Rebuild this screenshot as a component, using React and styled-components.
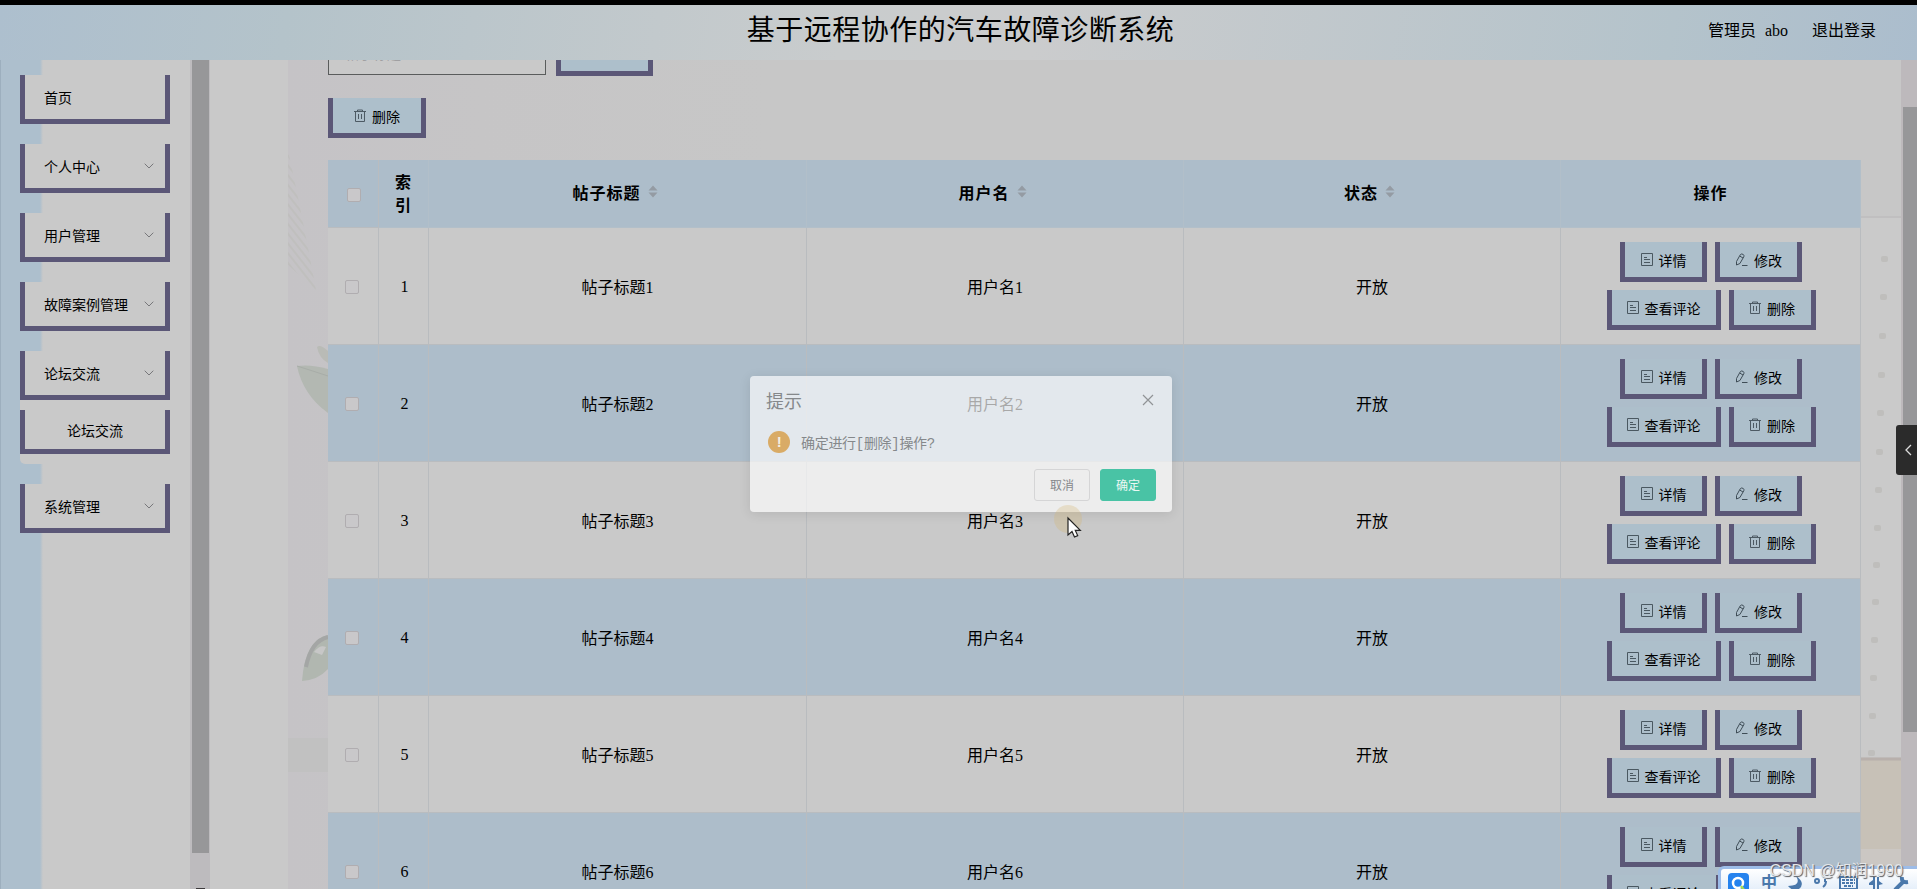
import styled, { createGlobalStyle } from 'styled-components';

const MENUS = [
  { name: '首页' },
  { name: '个人中心', arrow: true },
  { name: '用户管理', arrow: true },
  { name: '故障案例管理', arrow: true },
  { name: '论坛交流', arrow: true, children: ['论坛交流'] },
  { name: '系统管理', arrow: true },
];

const ROWS = [1, 2, 3, 4, 5, 6].map(id => ({
  id,
  title: `帖子标题${id}`,
  user: `用户名${id}`,
  state: '开放',
}));

const DOTS = [259, 297, 336, 375, 413, 452, 490, 528, 565, 602, 640, 678, 716, 753];

const ArrowIcon = () => (
  <svg width="10" height="6" viewBox="0 0 10 6" fill="none" stroke="#77777a">
    <path d="M0.7 0.7 5 5 9.3 0.7" />
  </svg>
);

const DocIcon = () => (
  <svg width="12" height="13" viewBox="0 0 12 13" fill="none" stroke="#4a5861">
    <path d="M.5.5h11v12H.5zM3 4.500h3M3 6.500h6M3 9.500h6" />
  </svg>
);

const EditIcon = () => (
  <svg width="13" height="13" viewBox="0 0 13 13" fill="none" stroke="#3f4d57">
    <path d="M1.500 8.500 5.300 1.700Q6.600.3 8.300 1.500 9.400 2.600 8.800 3.800L4.900 10.500 1.500 12zM5 3.200l3 1.800M7 12.500H12.500" />
  </svg>
);

const TrashIcon = () => (
  <svg width="12" height="14" viewBox="0 0 12 14" fill="none" stroke="#4d5a64">
    <path d="M0 2.500h12M3.500 2.500v-1.500h5v1.500M1.500 2.500v10h9v-10M4.500 5v5M7.500 5v5" />
  </svg>
);

const Backdrop = () => (
  <BackdropSvg viewBox="0 0 1613 829" fill="none">
    <defs>
      <pattern
        id="hatch"
        width="6"
        height="6"
        patternUnits="userSpaceOnUse"
        patternTransform="rotate(-38)"
      >
        <path d="M0 0v6" stroke="#bcbdb8" strokeWidth="4" />
      </pattern>
    </defs>
    <path d="M0 90Q13 150 28 230L0 205z" fill="url(#hatch)" opacity=".6" />
    <path d="M9 306q14-2 31 3v44Q15 335 9 306" fill="#b3b8b2" />
    <path d="M9 306q16 5 31 10" stroke="#a8ada8" />
    <path d="M29 287q3-3 11 4v12q-9-5-11-16" fill="#b9bbb6" />
    <path d="M14 621Q17 580 40 575v34q-10 11-26 12" fill="#b1b7b0" />
    <path d="M18 607Q23 581 40 577" stroke="#a4a6a5" strokeWidth="4" />
    <path d="M26 592q6-8 12-5l-4 8z" fill="#c7c7c7" />
    <path d="M0 678h40v34H0z" fill="#c1c1c1" />
    <path d="M1573 157h40v540h-40z" fill="#cacaca" />
    <path d="M1573 157h40" stroke="#c0bfc0" strokeWidth="2" />
    {DOTS.map((y, i) => (
      <rect key={y} x={1593 - i} y={y - 63} width="7" height="6" rx="2" fill="#bfbebc" />
    ))}
    <path d="M1573 699h40v90h-40z" fill="#c7c1b7" />
    <path d="M1573 699h40" stroke="#b8b0ac" strokeWidth="3" />
    <path d="M1573 789h40v40h-40z" fill="#cbc7c3" />
  </BackdropSvg>
);

const SortIcon = () => (
  <svg width="10" height="13" viewBox="0 0 10 13" fill="#949ba3">
    <path d="M5 .5 9.500 5.500H.5zM5 12.500 9.500 7.500H.5z" />
  </svg>
);

const Sidebar = () => (
  <SideBox>
    <MenuList>
      {MENUS.map(menu => (
        <MenuGroup key={menu.name} $open={!!menu.children}>
          <MenuItem>
            {menu.name}
            {menu.arrow && <ArrowIcon />}
          </MenuItem>
          {menu.children?.map(child => (
            <SubItem key={child}>{child}</SubItem>
          ))}
        </MenuGroup>
      ))}
    </MenuList>
    <SideTrack>
      <SideThumb />
      <SideTrackArrow />
    </SideTrack>
  </SideBox>
);

const PostTable = () => (
  <Table>
    <HeadRow>
      <Cell>
        <CheckBox $head />
      </Cell>
      <IndexHead>索引</IndexHead>
      {['帖子标题', '用户名', '状态'].map(label => (
        <SortCell key={label}>
          {label}
          <SortIcon />
        </SortCell>
      ))}
      <HeadCell>操作</HeadCell>
    </HeadRow>
    {ROWS.map(row => (
      <Row key={row.id} $striped={row.id % 2 === 0}>
        <Cell>
          <CheckBox />
        </Cell>
        <IndexCell>{row.id}</IndexCell>
        <Cell>{row.title}</Cell>
        <Cell>{row.user}</Cell>
        <Cell>{row.state}</Cell>
        <ActionCell>
          <ActionBtn>
            <DocIcon />
            详情
          </ActionBtn>
          <ActionBtn>
            <EditIcon />
            修改
          </ActionBtn>
          <ActionBtn>
            <DocIcon />
            查看评论
          </ActionBtn>
          <ActionBtn>
            <TrashIcon />
            删除
          </ActionBtn>
        </ActionCell>
      </Row>
    ))}
  </Table>
);

const ConfirmDialog = () => (
  <Dialog>
    <DialogHead>
      提示
      <svg width="12" height="12" viewBox="0 0 12 12" stroke="#909396" strokeWidth="1.200">
        <path d="M1 1 11 11M11 1 1 11" />
      </svg>
    </DialogHead>
    <DialogBody>
      <WarnMark>!</WarnMark>
      确定进行[删除]操作?
    </DialogBody>
    <DialogFoot>
      <DialogBtn>取消</DialogBtn>
      <DialogBtn $primary>确定</DialogBtn>
    </DialogFoot>
  </Dialog>
);

const InputBar = () => (
  <ImeBar>
    <ImeLogo>
      <svg width="15" height="15" viewBox="0 0 15 15" fill="none" stroke="#fff" strokeWidth="2.500">
        <circle cx="7" cy="7" r="5" />
        <path d="M10 10l3 4" stroke="#a6dc55" />
      </svg>
    </ImeLogo>
    <ImeMode>中</ImeMode>
    <svg width="17" height="17" viewBox="0 0 17 17" fill="#4a78ab">
      <path d="M9 1q6 10-8 10 5 6 11 3Q19 8 9 1" />
    </svg>
    <svg width="15" height="12" viewBox="0 0 15 12" fill="none" stroke="#4a78ab" strokeWidth="2">
      <circle cx="3" cy="4" r="2" />
      <path d="M11 2v3M12 4q0 4-3 6" />
    </svg>
    <svg width="19" height="14" viewBox="0 0 19 14" fill="none" stroke="#4a78ab" strokeWidth="2">
      <path d="M1 1h17v12H1z" />
      <path d="M3 4h13M3 7h13M5 10h9" strokeDasharray="3 1" />
    </svg>
    <svg width="15" height="14" viewBox="0 0 15 14" fill="#4a78ab">
      <path d="M1 7 5 4V1h2v12H5V9H1zM9 1h2v4l4 3-4 1v4H9z" />
    </svg>
    <svg width="16" height="16" viewBox="0 0 16 16" fill="none" stroke="#4a78ab" strokeWidth="4">
      <path d="M2 15 10 7M9 2q-1 6 6 5" />
    </svg>
  </ImeBar>
);

const App = () => {
  return (
    <Page>
      <GlobalStyle />
      <Header>
        <Spacer />
        <Title>基于远程协作的汽车故障诊断系统</Title>
        <UserBox>
          <span>管理员 abo</span>
          <span>退出登录</span>
        </UserBox>
      </Header>
      <Body>
        <Sidebar />
        <Main>
          <Backdrop />
          <Content>
            <SearchRow>
              <SearchInput placeholder="帖子标题" />
              <SearchBtn />
            </SearchRow>
            <DeleteBtn>
              <TrashIcon />
              删除
            </DeleteBtn>
            <PostTable />
          </Content>
        </Main>
        <PageTrack>
          <PageThumb />
        </PageTrack>
      </Body>
      <ConfirmDialog />
      <Pointer viewBox="0 0 36 40">
        <circle cx="15" cy="15" r="14" fill="#d5b773" opacity=".3" />
        <path
          d="M15 14v17l4-3.500 2.500 5.500 3.200-1.400-2.400-5.200h5z"
          fill="#fff"
          stroke="#222"
          strokeWidth="1.200"
        />
      </Pointer>
      <SideTab>
        <svg width="7" height="12" viewBox="0 0 7 12" fill="none" stroke="#ddd" strokeWidth="1.300">
          <path d="M6 1 1 6 6 11" />
        </svg>
      </SideTab>
      <InputBar />
      <Watermark>CSDN @知润1990</Watermark>
    </Page>
  );
};

export default App;

const GlobalStyle = createGlobalStyle`
  * {
    box-sizing: border-box;
  }

  body {
    margin: 0;
    overflow: hidden;
    background: #c9c9c9;
    font-family: 'Liberation Serif', 'Noto Sans CJK SC', serif;
    font-weight: 400;
    color: #000;
  }

  svg {
    flex-shrink: 0;
  }
`;

const Page = styled.div`
  position: relative;
  display: flex;
  flex-direction: column;
  width: 1917px;
  height: 889px;
  overflow: hidden;
  border-top: 5px solid #000;
`;

const Header = styled.header`
  display: grid;
  grid-template-columns: 1fr auto 1fr;
  align-items: center;
  height: 55px;
  flex-shrink: 0;
  padding: 0 41px 4px 45px;
  background: linear-gradient(100deg, #adbfce, #b4c3ca 15%, #c9cccd 44%, #cbcccd 54%, #b4c3cb 87%, #abbdcd);
`;

const Spacer = styled.div``;

const Title = styled.h1`
  margin: 0;
  padding-top: 1px;
  font-size: 28px;
  font-weight: 400;
  letter-spacing: 0.5px;
  line-height: 40px;
`;

const UserBox = styled.div`
  display: flex;
  justify-content: flex-end;
  gap: 24px;
  font-size: 16px;
  line-height: 22px;
  word-spacing: 5px;
`;

const Body = styled.div`
  display: flex;
  flex: 1;
  min-height: 0;
`;

const SideBox = styled.aside`
  display: flex;
  width: 210px;
  border-left: 1px solid #9dafbe;
  background: linear-gradient(90deg, #adbfcd 39px, #c9c9c9 42px);
`;

const MenuList = styled.nav`
  display: flex;
  flex-direction: column;
  gap: 20px;
  flex: 1;
  padding: 15px 20px 0 19px;
`;

const MenuGroup = styled.div`
  padding-bottom: ${props => (props.$open ? '10px' : 0)};
  border-radius: 0 0 5px 5px;
  background: #c9c9c9;
`;

const MenuItem = styled.div`
  display: flex;
  align-items: center;
  justify-content: space-between;
  height: 49px;
  padding: 0 11px 1px 19px;
  border: 5px solid #5b5777;
  border-top: none;
  font-size: 14px;
`;

const SubItem = styled.div`
  height: 44px;
  margin-top: 10px;
  border: 5px solid #5b5777;
  border-top: none;
  font-size: 14px;
  line-height: 44px;
  text-align: center;
`;

const SideTrack = styled.div`
  display: flex;
  flex-direction: column;
  align-items: center;
  justify-content: space-between;
  width: 20px;
  padding: 0 1px 0 2px;
  background: #bdbbbe;
`;

const SideThumb = styled.div`
  width: 17px;
  height: 793px;
  background: #979799;
`;

const SideTrackArrow = styled.div`
  width: 9px;
  height: 1px;
  background: #3d3a3d;
`;

const Main = styled.main`
  position: relative;
  flex: 1;
  min-width: 0;
  padding-left: 78px;
  overflow: hidden;
  background: #c9c9c9;
`;

const BackdropSvg = styled.svg`
  position: absolute;
  left: 78px;
  top: 0;
  width: 1613px;
  height: 829px;
  background: linear-gradient(90deg, #c5c3c6, #c6c5c6 12%, #c7c7c7 30%);
`;

const Content = styled.div`
  position: relative;
  padding: 0 40px;
`;

const SearchRow = styled.div`
  display: flex;
  align-items: flex-end;
  gap: 10px;
  height: 41px;
  margin-top: -25px;
`;

const SearchInput = styled.input`
  width: 218px;
  height: 40px;
  margin-bottom: 1px;
  padding: 0 16px;
  border: 1px solid #5a5c5c;
  background: #c9c9c9;
  font: inherit;
  font-size: 14px;

  &::placeholder {
    color: #a0a0a2;
  }
`;

const ActionBtn = styled.button`
  display: flex;
  align-items: center;
  justify-content: center;
  gap: 6px;
  height: 40px;
  padding: 0 15px;
  border: 5px solid #5b5777;
  border-top: none;
  background: #adbfcb;
  color: #000;
  font: inherit;
  font-size: 14px;
`;

const SearchBtn = styled(ActionBtn)`
  width: 97px;
`;

const DeleteBtn = styled(ActionBtn)`
  width: 98px;
  margin-top: 22px;
`;

const Table = styled.div`
  width: 1533px;
  margin-top: 22px;
  font-size: 16px;
`;

const Row = styled.div`
  display: grid;
  grid-template-columns: 51px 50px 378px 377px 377px 300px;
  height: 117px;
  background: ${props => (props.$striped ? '#adbdca' : '#c9c9c9')};
`;

const HeadRow = styled(Row)`
  height: 68px;
  background: #adbdca;
`;

const Cell = styled.div`
  display: flex;
  align-items: center;
  justify-content: center;
  border-right: 1px solid #b9bcbf;
  border-bottom: 1px solid #b9bcbf;
`;

const HeadCell = styled(Cell)`
  padding-bottom: 3px;
  border-color: #b2bfc9;
  font-weight: 700;
  letter-spacing: 1px;
`;

const SortCell = styled(HeadCell)`
  gap: 7px;
  padding-right: 5px;
  padding-bottom: 4px;
`;

const IndexHead = styled(HeadCell)`
  padding: 0 16px;
  line-height: 23px;
`;

const IndexCell = styled(Cell)`
  padding: 2px 0 0 2px;
`;

const ActionCell = styled(Cell)`
  flex-wrap: wrap;
  align-content: flex-start;
  gap: 8px;
  padding: 14px 40px 0 41px;

  ${ActionBtn} {
    min-width: 87px;
  }
`;

const CheckBox = styled.span`
  width: 14px;
  height: 14px;
  margin: ${props => (props.$head ? '2px 0 0 2px' : '2px 2px 0 0')};
  border: 1px solid #b0adb0;
  border-radius: 2px;
  background: #c9c8ca;
`;

const Dialog = styled.section`
  position: absolute;
  left: 750px;
  top: 371px;
  width: 422px;
  height: 136px;
  padding: 0 16px;
  border-radius: 4px;
  background: rgba(255, 255, 255, 0.66);
  box-shadow: 0 2px 12px rgba(0, 0, 0, 0.1);
  color: #85888b;
`;

const DialogHead = styled.div`
  display: flex;
  align-items: center;
  justify-content: space-between;
  height: 48px;
  padding-right: 2px;
  font-size: 18px;
`;

const DialogBody = styled.div`
  display: flex;
  align-items: center;
  gap: 11px;
  height: 36px;
  padding-left: 2px;
  font-family: 'Liberation Mono', 'Noto Sans CJK SC', monospace;
  font-size: 14px;
  letter-spacing: -0.3px;
`;

const WarnMark = styled.span`
  width: 22px;
  height: 22px;
  border-radius: 50%;
  background: #d9ab66;
  color: #f3eee4;
  font: 700 15px/22px 'Liberation Sans', sans-serif;
  text-align: center;
`;

const DialogFoot = styled.div`
  display: flex;
  justify-content: flex-end;
  gap: 10px;
  padding-top: 9px;
`;

const DialogBtn = styled.button`
  width: 56px;
  height: 32px;
  padding: 0;
  border: 1px solid ${props => (props.$primary ? '#49c3a5' : '#d5d5d6')};
  border-radius: 3px;
  background: ${props => (props.$primary ? '#49c3a5' : 'transparent')};
  color: ${props => (props.$primary ? '#ecf8f4' : '#85888b')};
  font: inherit;
  font-size: 12px;
`;

const Pointer = styled.svg`
  position: absolute;
  left: 1053px;
  top: 499px;
  width: 36px;
  height: 40px;
`;

const PageTrack = styled.div`
  width: 16px;
  padding: 47px 0 0 2px;
  background: #bdb9bc;
`;

const PageThumb = styled.div`
  height: 625px;
  background: #979799;
`;

const SideTab = styled.div`
  position: absolute;
  right: 0;
  top: 420px;
  display: flex;
  align-items: center;
  justify-content: center;
  width: 21px;
  height: 50px;
  padding-left: 4px;
  border-radius: 3px 0 0 3px;
  background: #2b2b2b;
`;

const ImeBar = styled.div`
  position: absolute;
  right: -6px;
  top: 861px;
  display: flex;
  align-items: center;
  gap: 10px;
  width: 205px;
  height: 34px;
  padding: 0 7px;
  border: 3px solid #9dbce8;
  border-radius: 6px;
  background: linear-gradient(#fff, #dce9f8);
`;

const ImeLogo = styled.span`
  display: flex;
  align-items: center;
  justify-content: center;
  flex-shrink: 0;
  width: 21px;
  height: 20px;
  border-radius: 4px;
  background: #2683ee;
`;

const ImeMode = styled.span`
  flex-shrink: 0;
  margin-left: 2px;
  color: #4a78ab;
  font-size: 16px;
  font-weight: 700;
  line-height: 18px;
`;

const Watermark = styled.div`
  position: absolute;
  right: 14px;
  top: 856px;
  color: #e4e6e9;
  font: 16px/20px 'Liberation Sans', 'Noto Sans CJK SC', sans-serif;
  text-shadow: 1px 1px 1px #55585c;
  white-space: nowrap;
`;
